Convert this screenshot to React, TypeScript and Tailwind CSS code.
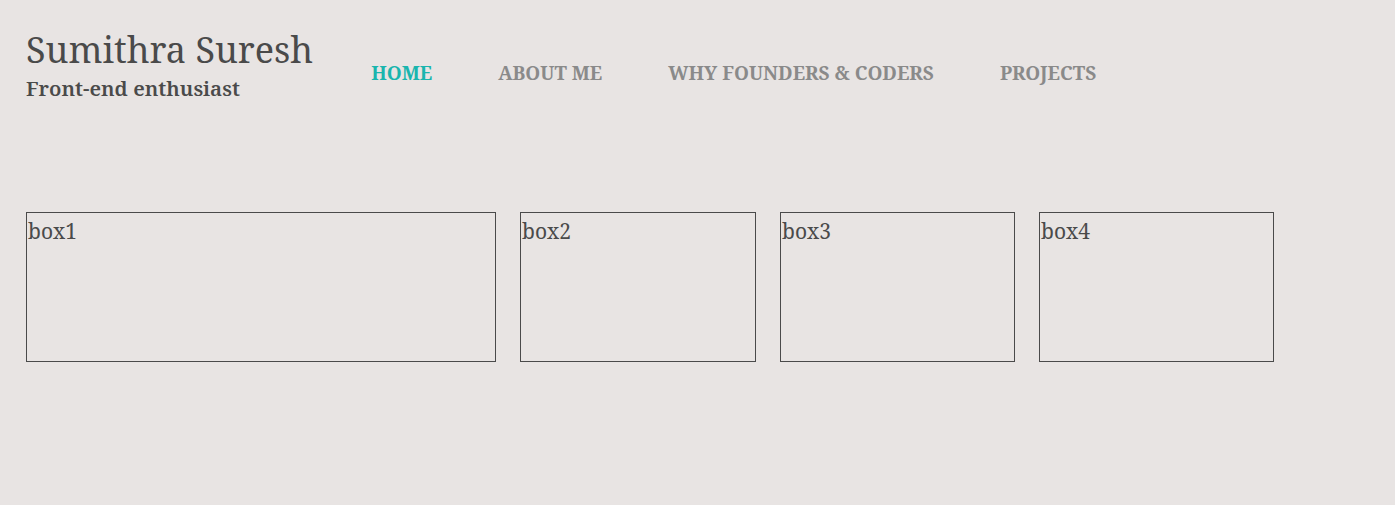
import React from "react";

export default function App() {
  const font = { fontFamily: '"Noto Serif", "DejaVu Serif", serif' };
  return (
    <div className="min-h-[505px] w-full bg-[#e8e4e3] text-[#4a4a4a]" style={font}>
      <header className="flex items-start pl-[26px] pt-[28px]">
        <div className="flex flex-col">
          <h1 className="text-[36px] leading-[44px] font-normal">Sumithra Suresh</h1>
          <p className="text-[20.7px] leading-[26px] font-semibold mt-[3px]">Front-end enthusiast</p>
        </div>
        <nav className="ml-[58px] mt-[31px] flex gap-[66px] text-[19px] font-bold uppercase text-[#8a8a8a]">
          <a className="text-[#1ab5ae]">Home</a>
          <a>About me</a>
          <a>Why Founders &amp; Coders</a>
          <a>Projects</a>
        </nav>
      </header>
      <main className="mt-[111px] flex gap-[24px] pl-[26px]">
        <div className="h-[150px] w-[470px] border border-[#4a4a4a] text-[21px] leading-[36px] pl-[1px]">box1</div>
        <div className="h-[150px] w-[236px] border border-[#4a4a4a] text-[21px] leading-[36px] pl-[1px]">box2</div>
        <div className="h-[150px] w-[235px] border border-[#4a4a4a] text-[21px] leading-[36px] pl-[1px]">box3</div>
        <div className="h-[150px] w-[235px] border border-[#4a4a4a] text-[21px] leading-[36px] pl-[1px]">box4</div>
      </main>
    </div>
  );
}
